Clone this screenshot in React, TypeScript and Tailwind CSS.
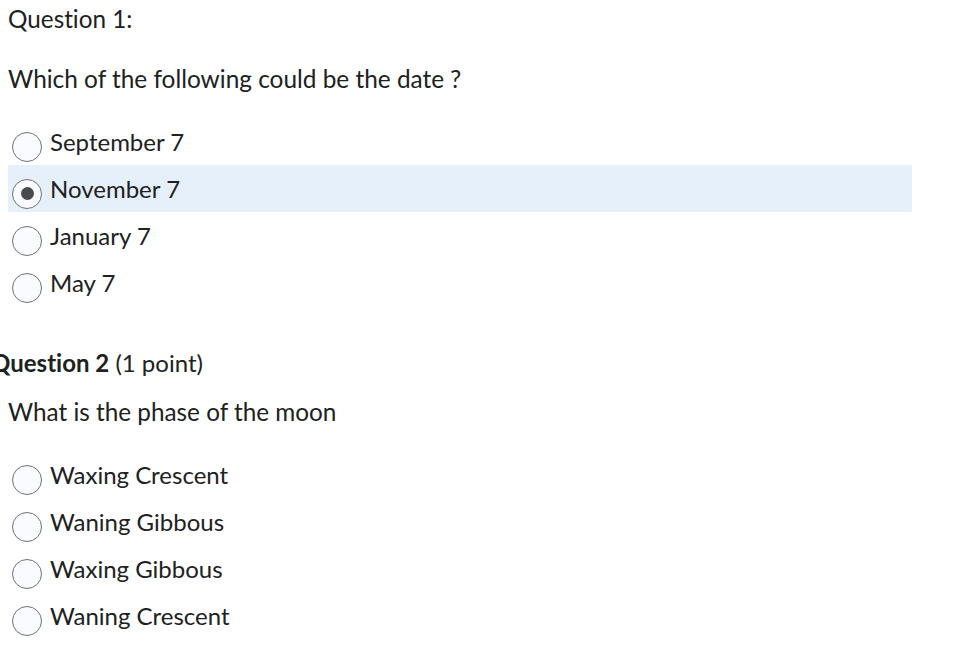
import React from "react";

function Radio({ checked }: { checked?: boolean }) {
  return (
    <span className="mt-[13.5px] flex h-[30px] w-[30px] shrink-0 items-center justify-center rounded-full border border-[#6e7376] bg-[#f9fbff]">
      {checked && <span className="h-[13px] w-[13px] rounded-full bg-[#494c4e]" />}
    </span>
  );
}

function Option({ label, checked }: { label: string; checked?: boolean }) {
  return (
    <div className={`flex h-[47px] w-[904px] items-start gap-2 pl-1 ${checked ? "bg-[#e6f0fa]" : ""}`}>
      <Radio checked={checked} />
      <span className="mt-[8.5px] leading-[30px]">{label}</span>
    </div>
  );
}

export default function App() {
  return (
    <div
      className="min-h-[665px] w-[969px] overflow-hidden bg-white pl-2 text-[24px] text-[#202122] [font-variant-ligatures:none]"
      style={{ fontFamily: "Lato, 'Noto Sans', sans-serif" }}
    >
      <div className="pt-[4px] text-[24.3px] leading-[30px]">Question 1:</div>
      <div className="mt-[30px] text-[24.4px] leading-[30px]">Which of the following could be the date ?</div>
      <div className="mt-[24px] flex flex-col">
        <Option label="September 7" />
        <Option label="November 7" checked />
        <Option label="January 7" />
        <Option label="May 7" />
      </div>
      <div className="ml-[-17px] mt-[42px] leading-[30px]">
        <span className="font-bold">Question 2</span> (1 point)
      </div>
      <div className="mt-[19px] text-[24.3px] leading-[30px]">What is the phase of the moon</div>
      <div className="mt-[24px] flex flex-col">
        <Option label="Waxing Crescent" />
        <Option label="Waning Gibbous" />
        <Option label="Waxing Gibbous" />
        <Option label="Waning Crescent" />
      </div>
    </div>
  );
}
